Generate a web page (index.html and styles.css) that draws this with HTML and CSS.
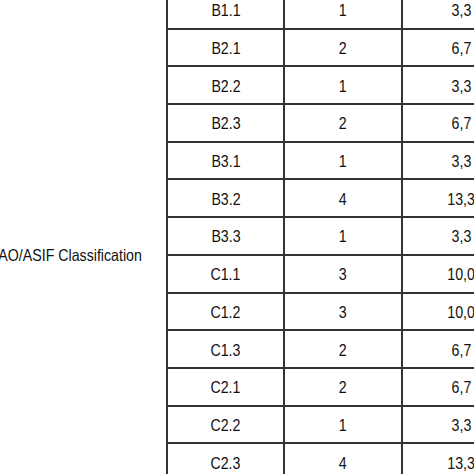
FILE: index.html
```html
<!DOCTYPE html>
<html>
<head>
<meta charset="utf-8">
<link rel="stylesheet" href="styles.css">
</head>
<body>
<div class="frame">
<table class="grid">
  <colgroup>
    <col class="c-label"><col class="c-code"><col class="c-n"><col class="c-pct">
  </colgroup>
  <tbody>
    <tr><td class="label" rowspan="13"><div class="label-box"><span class="t">AO/ASIF Classification</span></div></td><td><span class="t">B1.1</span></td><td><span class="t">1</span></td><td><span class="t">3,3</span></td></tr>
    <tr><td><span class="t">B2.1</span></td><td><span class="t">2</span></td><td><span class="t">6,7</span></td></tr>
    <tr><td><span class="t">B2.2</span></td><td><span class="t">1</span></td><td><span class="t">3,3</span></td></tr>
    <tr><td><span class="t">B2.3</span></td><td><span class="t">2</span></td><td><span class="t">6,7</span></td></tr>
    <tr><td><span class="t">B3.1</span></td><td><span class="t">1</span></td><td><span class="t">3,3</span></td></tr>
    <tr><td><span class="t">B3.2</span></td><td><span class="t">4</span></td><td><span class="t">13,3</span></td></tr>
    <tr><td><span class="t">B3.3</span></td><td><span class="t">1</span></td><td><span class="t">3,3</span></td></tr>
    <tr><td><span class="t">C1.1</span></td><td><span class="t">3</span></td><td><span class="t">10,0</span></td></tr>
    <tr><td><span class="t">C1.2</span></td><td><span class="t">3</span></td><td><span class="t">10,0</span></td></tr>
    <tr><td><span class="t">C1.3</span></td><td><span class="t">2</span></td><td><span class="t">6,7</span></td></tr>
    <tr><td><span class="t">C2.1</span></td><td><span class="t">2</span></td><td><span class="t">6,7</span></td></tr>
    <tr><td><span class="t">C2.2</span></td><td><span class="t">1</span></td><td><span class="t">3,3</span></td></tr>
    <tr><td><span class="t">C2.3</span></td><td><span class="t">4</span></td><td><span class="t">13,3</span></td></tr>
  </tbody>
</table>
</div>
</body>
</html>
```

FILE: styles.css
```css
html, body {
  margin: 0;
  padding: 0;
  background: #ffffff;
}

body {
  width: 474px;
  height: 474px;
  overflow: hidden;
}

.frame {
  width: 474px;
  height: 474px;
  overflow: hidden;
}

.grid {
  border-collapse: collapse;
  table-layout: fixed;
  width: 520px;
  margin-top: -10px;
  font-family: "Liberation Sans", Arial, sans-serif;
  font-size: 16.5px;
  color: #111111;
}

.c-label { width: 167px; }
.c-code { width: 117px; }
.c-n { width: 118px; }
.c-pct { width: 118px; }

.grid tr {
  height: 37.7px;
}

.grid td {
  border: 2px solid #333333;
  text-align: center;
  vertical-align: middle;
  padding: 2px 0 0 0;
  white-space: nowrap;
}

.grid td.label {
  border-top: none;
  border-bottom: none;
  border-left: none;
  padding: 40px 0 0 0;
}

.label-box {
  display: flex;
  justify-content: flex-end;
  padding-right: 24px;
}

.t {
  display: inline-block;
  transform: scaleX(0.86);
}

.label-box .t {
  flex: none;
  transform-origin: right center;
}
```
